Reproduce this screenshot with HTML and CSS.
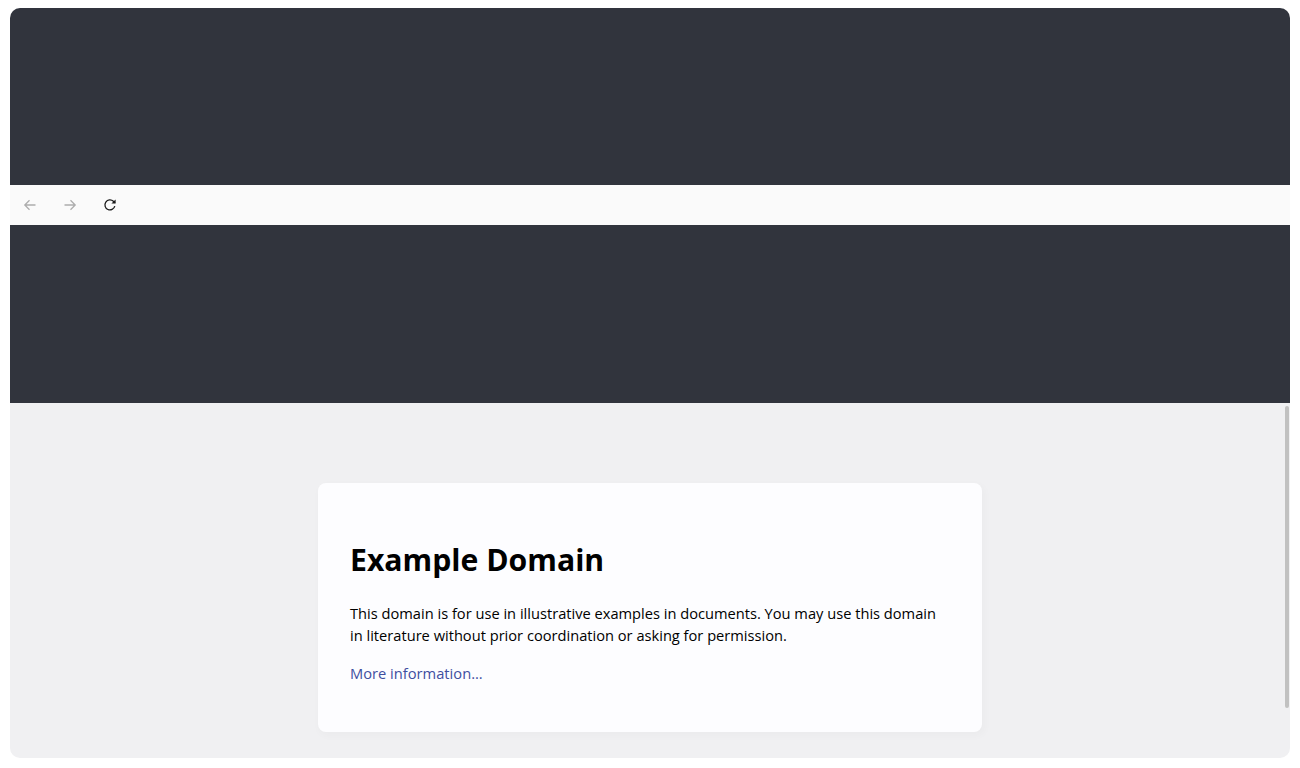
FILE: index.html
```html
<!DOCTYPE html>
<html lang="en">
<head>
<meta charset="utf-8">
<title>Example Domain</title>
<link rel="stylesheet" href="styles.css">
</head>
<body>
<div class="window">
  <div class="dark top"></div>
  <div class="toolbar">
    <span class="btn muted"><svg viewBox="0 0 16 16" width="16" height="16"><path d="M13.5 8H2.8M7.5 3.2 2.8 8l4.7 4.8"/></svg></span>
    <span class="btn muted"><svg viewBox="0 0 16 16" width="16" height="16"><path d="M2.5 8h10.7M8.5 3.2 13.2 8l-4.7 4.8"/></svg></span>
    <span class="btn"><svg viewBox="0 0 16 16" width="16" height="16"><path d="M12.8 9.2A5 5 0 1 1 11.4 4.3L13 5.8"/><path class="fill" d="M13.6 2.4v4.2H9.4z"/></svg></span>
  </div>
  <div class="dark bottom"></div>
  <main class="page">
    <article class="card">
      <h1>Example Domain</h1>
      <p>This domain is for use in illustrative examples in documents. You may use this domain in literature without prior coordination or asking for permission.</p>
      <p class="more"><a href="#">More information...</a></p>
    </article>
    <div class="scrollbar"></div>
  </main>
</div>
</body>
</html>
```
FILE: styles.css
```css
html, body { height: 100%; }
body {
  margin: 0;
  padding: 8px 10px 10px;
  box-sizing: border-box;
  background: #ffffff;
  font-family: "Open Sans", "Noto Sans", sans-serif;
}
.window {
  height: 750px;
  border-radius: 10px;
  overflow: hidden;
  display: flex;
  flex-direction: column;
}
.dark { background: #31343d; }
.top { height: 177px; }
.bottom { height: 178px; }
.toolbar {
  height: 40px;
  background: #fafafa;
  display: flex;
  align-items: center;
}
.btn {
  width: 40px;
  height: 40px;
  display: flex;
  align-items: center;
  justify-content: center;
}
.btn svg { fill: none; stroke: #1a1a1a; stroke-width: 1.3; }
.btn .fill { fill: #1a1a1a; stroke: none; }
.btn.muted svg { stroke: #adadad; }
.page {
  flex: 1;
  background: #f0f0f2;
  display: flex;
  justify-content: center;
  padding-top: 80px;
  position: relative;
}
.card {
  width: 664px;
  height: 249px;
  box-sizing: border-box;
  padding: 32px;
  background: #fdfdff;
  border-radius: 8px;
  box-shadow: 2px 3px 7px 2px rgba(0, 0, 0, 0.02);
  color: #000000;
}
h1 {
  margin: 25px 0 22px;
  font-size: 30.2px;
  line-height: 40px;
  font-weight: 700;
}
p {
  margin: 0;
  font-size: 14.65px;
  line-height: 22px;
}
.more { margin-top: 16px; font-size: 14.7px; }
a { color: #3f4f9f; text-decoration: none; }
.scrollbar {
  position: absolute;
  right: 1px;
  top: 3px;
  width: 4px;
  height: 302px;
  background: #c1c1c1;
  border-radius: 2px;
}
```
